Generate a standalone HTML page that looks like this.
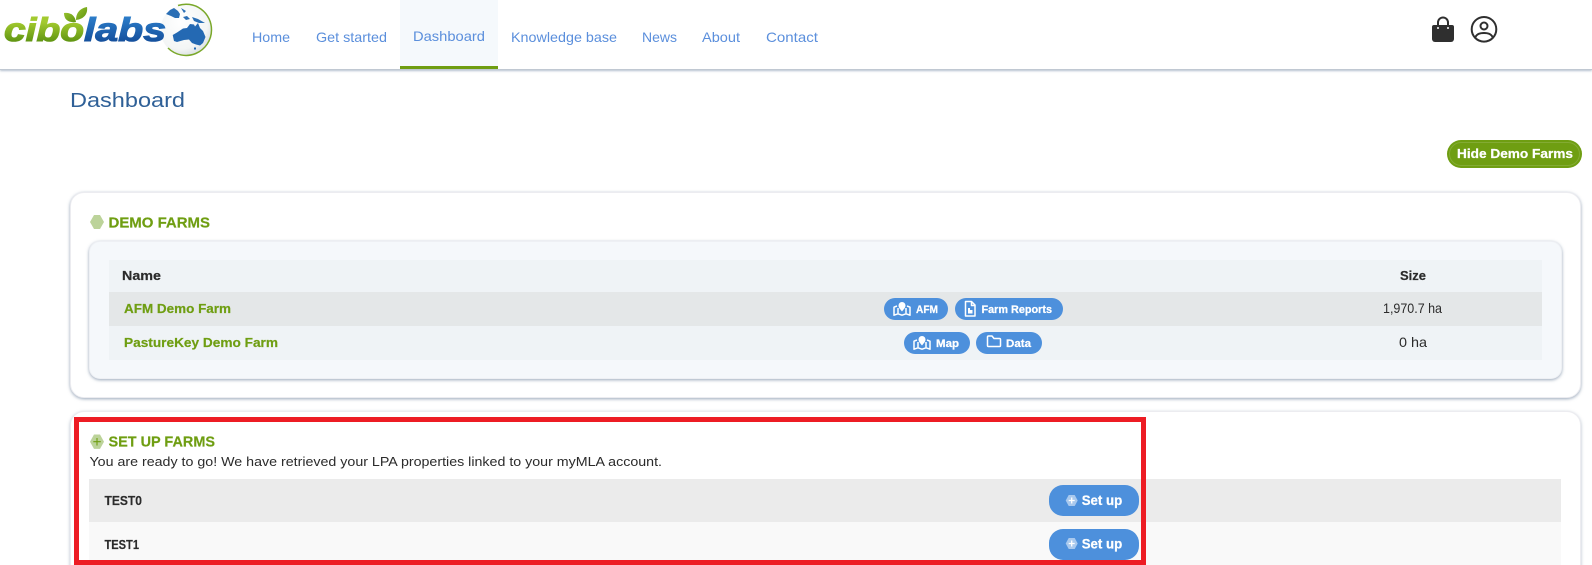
<!DOCTYPE html>
<html lang="en">
<head>
<meta charset="utf-8">
<title>Dashboard</title>
<style>
html,body{margin:0;padding:0;background:#fff;font-family:"Liberation Sans",sans-serif}
#page{position:relative;width:1592px;height:565px;overflow:hidden;background:#fff}
.b{position:absolute;box-sizing:border-box}
svg{position:absolute;left:0;top:0}
text{font-family:"Liberation Sans",sans-serif}
.nav{font-size:14px;fill:#5b8fdc}
.bw{font-weight:700;fill:#fff;stroke:#fff;stroke-width:.25}
.g{font-weight:700;fill:#6f9e12;stroke:#6f9e12;stroke-width:.2}
.d{fill:#2b2b2b}
.db{fill:#2b2b2b;font-weight:700;stroke:#2b2b2b;stroke-width:.2}
</style>
</head>
<body>
<div id="page">
<!-- header -->
<div class="b" style="left:0;top:0;width:1592px;height:70px;background:#fff;border-bottom:1px solid #c0c8d2;box-shadow:0 1px 2px rgba(120,140,165,.55)"></div>
<div class="b" style="left:400px;top:0;width:98px;height:69px;background:#f5f9fc;border-bottom:3px solid #6f9e12"></div>
<!-- demo card -->
<div class="b" style="left:70px;top:192px;width:1511px;height:206px;background:#fff;border:1px solid #ececf0;border-radius:14px;box-shadow:0 1px 3px rgba(110,130,155,.7)"></div>
<div class="b" style="left:89px;top:241px;width:1473px;height:138px;background:#f5f8fb;border:1px solid #eef0f4;border-radius:11px;box-shadow:0 1px 3px rgba(110,130,155,.7)"></div>
<div class="b" style="left:109px;top:260px;width:1433px;height:32px;background:#eff3f6"></div>
<div class="b" style="left:109px;top:292px;width:1433px;height:34px;background:#e4e7e8"></div>
<div class="b" style="left:109px;top:326px;width:1433px;height:34px;background:#eff3f6"></div>
<!-- buttons -->
<div class="b" style="left:1447px;top:140px;width:135px;height:28px;background:#6f9e12;border-radius:14px"></div>
<div class="b" style="left:1449px;top:142px;width:131px;height:24px;border:1px solid rgba(255,255,255,.14);border-radius:12px"></div>
<div class="b" style="left:884px;top:298px;width:64px;height:22px;background:#4d90dc;border-radius:11px"></div>
<div class="b" style="left:955px;top:298px;width:108px;height:22px;background:#4d90dc;border-radius:11px"></div>
<div class="b" style="left:904px;top:332px;width:66px;height:22px;background:#4d90dc;border-radius:11px"></div>
<div class="b" style="left:976px;top:332px;width:66px;height:22px;background:#4d90dc;border-radius:11px"></div>
<!-- setup card -->
<div class="b" style="left:70px;top:411px;width:1511px;height:180px;background:#fff;border:1px solid #ececf0;border-radius:14px;box-shadow:0 1px 3px rgba(110,130,155,.5)"></div>
<div class="b" style="left:89px;top:479px;width:1472px;height:43px;background:#ebebeb"></div>
<div class="b" style="left:89px;top:522px;width:1472px;height:43px;background:#f9f9f9"></div>
<div class="b" style="left:1049px;top:485px;width:90px;height:31px;background:#4d90dc;border-radius:14px"></div>
<div class="b" style="left:1049px;top:529px;width:90px;height:31px;background:#4d90dc;border-radius:14px"></div>
<!-- annotation -->
<div class="b" style="left:74px;top:417px;width:1072px;height:148px;border:5px solid #ed1c24"></div>

<svg width="1592" height="565" viewBox="0 0 1592 565" xmlns="http://www.w3.org/2000/svg">
<defs>
<linearGradient id="lg" gradientUnits="userSpaceOnUse" x1="0" y1="22" x2="0" y2="42"><stop offset="0" stop-color="#a3ca2f"/><stop offset="1" stop-color="#5f9412"/></linearGradient>
<linearGradient id="lb" gradientUnits="userSpaceOnUse" x1="0" y1="16" x2="0" y2="42"><stop offset="0" stop-color="#2d7fcb"/><stop offset="1" stop-color="#154f9c"/></linearGradient>
<linearGradient id="lf" x1="0" y1="0" x2="1" y2="1"><stop offset="0" stop-color="#96c22c"/><stop offset="1" stop-color="#5f9412"/></linearGradient>
<radialGradient id="gl" cx=".4" cy=".35" r=".75"><stop offset="0" stop-color="#fff"/><stop offset=".7" stop-color="#f3f5f5"/><stop offset="1" stop-color="#cfd6d8"/></radialGradient>
</defs>
<!-- logo -->
<circle cx="186" cy="30" r="25.500" fill="url(#gl)"/>
<path d="M178 5.500A25.500 25.500 0 0 1 211.500 30A25.500 25.500 0 0 1 168 48" fill="none" stroke="#7aa82a" stroke-width="1.500"/>
<path d="M172.700 35L177 32.500L183 28.500L187 28L190 24L194 24.500L195 26.500L198 23L200 28L203 31L205.500 37L203 43L200 45.500L196 44.500L192 43L189 39.500L184 40L177 42L174 41Z" fill="#2469b3"/>
<path d="M166 14L170 10L174 8L178 11L180 14L179 18L175 18L171 16ZM183 17L187 16L190 19L186 20ZM192 17L198 19L205 23L199 23L194 21ZM181 8L186 11L184 13Z" fill="#2b6fb5"/>
<path d="M194 47.500l2 0 0 2-2 0z" fill="#2469b3"/>
<path d="M76 22C75 15 70 12 64 13C64 20 69 23 76 22Z" fill="url(#lf)"/>
<path d="M76 20C76 12 81 8 87 7C88 14 84 19 76 20Z" fill="url(#lf)"/>
<text x="4" y="41" font-size="33" font-weight="700" font-style="italic" fill="url(#lg)" stroke="url(#lg)" stroke-width="1.100" textLength="80" lengthAdjust="spacingAndGlyphs">cibo</text>
<text x="84" y="41" font-size="33" font-weight="700" font-style="italic" fill="url(#lb)" stroke="url(#lb)" stroke-width="1.100" textLength="82" lengthAdjust="spacingAndGlyphs">labs</text>

<!-- nav -->
<text class="nav" x="252" y="42" textLength="38" lengthAdjust="spacingAndGlyphs">Home</text>
<text class="nav" x="316" y="42" textLength="71" lengthAdjust="spacingAndGlyphs">Get started</text>
<text class="nav" x="413" y="41" textLength="72" lengthAdjust="spacingAndGlyphs">Dashboard</text>
<text class="nav" x="511" y="42" textLength="106" lengthAdjust="spacingAndGlyphs">Knowledge base</text>
<text class="nav" x="642" y="42" textLength="35" lengthAdjust="spacingAndGlyphs">News</text>
<text class="nav" x="702" y="42" textLength="38" lengthAdjust="spacingAndGlyphs">About</text>
<text class="nav" x="766" y="42" textLength="52" lengthAdjust="spacingAndGlyphs">Contact</text>

<!-- bag + user icons -->
<path d="M1434 25h18a2 2 0 0 1 2 2V39a3 3 0 0 1-3 3h-16a3 3 0 0 1-3-3V27a2 2 0 0 1 2-2z" fill="#2f2f2f"/>
<path d="M1438 27V22.500a5 5 0 0 1 10 0V27" fill="none" stroke="#2f2f2f" stroke-width="2"/>
<circle cx="1438" cy="28" r="1" fill="#fff"/><circle cx="1448" cy="28" r="1" fill="#fff"/>
<circle cx="1484" cy="29.300" r="12.300" fill="none" stroke="#2f2f2f" stroke-width="2"/>
<circle cx="1484" cy="26" r="3.500" fill="none" stroke="#2f2f2f" stroke-width="2"/>
<path d="M1475 38C1476.500 33.500 1480.500 33 1484 33S1491.500 33.500 1493 38" fill="none" stroke="#2f2f2f" stroke-width="2"/>

<!-- title -->
<text x="70" y="107" font-size="20" fill="#2f6097" textLength="115" lengthAdjust="spacingAndGlyphs">Dashboard</text>
<text class="bw" x="1457" y="158" font-size="13" textLength="116" lengthAdjust="spacingAndGlyphs">Hide Demo Farms</text>

<!-- demo farms -->
<path d="M94 215h6l4 7-4 7h-6l-4-7z" fill="#bcd39a"/>
<text class="g" x="108.500" y="227.500" font-size="15" textLength="101.500" lengthAdjust="spacingAndGlyphs">DEMO FARMS</text>
<text class="db" x="122" y="280" font-size="13" textLength="39" lengthAdjust="spacingAndGlyphs">Name</text>
<text class="db" x="1400" y="280" font-size="13" textLength="26" lengthAdjust="spacingAndGlyphs">Size</text>
<text class="g" x="124" y="313" font-size="13" textLength="107" lengthAdjust="spacingAndGlyphs">AFM Demo Farm</text>
<text class="g" x="124" y="347" font-size="13" textLength="154" lengthAdjust="spacingAndGlyphs">PastureKey Demo Farm</text>
<text class="d" x="1383" y="313" font-size="14" textLength="59" lengthAdjust="spacingAndGlyphs">1,970.7 ha</text>
<text class="d" x="1399" y="347" font-size="14" textLength="28" lengthAdjust="spacingAndGlyphs">0 ha</text>

<!-- pill icons -->
<g fill="none" stroke="#fff" stroke-width="1.500" stroke-linejoin="round">
<path d="M897 306l-3 1.200v8l4-1.400 4 1.400 4-1.400 4 1.400v-8l-3-1.200M898 308v6M906 308v6"/>
<path d="M917 340l-3 1.200v8l4-1.400 4 1.400 4-1.400 4 1.400v-8l-3-1.200M918 342v6M926 342v6"/>
<path d="M965.500 301.500h6l3.500 3.500V316h-9.500zM971.500 301.500v4h3.500"/>
<path d="M987.500 337a1 1 0 0 1 1-1h3.500l2 2.500h5.500a1 1 0 0 1 1 1v6a1 1 0 0 1-1 1h-11a1 1 0 0 1-1-1z"/>
</g>
<path d="M902 311.500c-2-2.500-3.500-4-3.500-6a3.500 3.500 0 0 1 7 0c0 2-1.500 3.500-3.500 6z" fill="#fff"/>
<path d="M922 345.500c-2-2.500-3.500-4-3.500-6a3.500 3.500 0 0 1 7 0c0 2-1.500 3.500-3.500 6z" fill="#fff"/>
<path d="M968 308h2v2h2.500v3.500H968z" fill="#fff"/>
<text class="bw" x="916" y="313" font-size="11" textLength="22" lengthAdjust="spacingAndGlyphs">AFM</text>
<text class="bw" x="981.500" y="313" font-size="11" textLength="70.500" lengthAdjust="spacingAndGlyphs">Farm Reports</text>
<text class="bw" x="936" y="347" font-size="11" textLength="23" lengthAdjust="spacingAndGlyphs">Map</text>
<text class="bw" x="1006" y="347" font-size="11" textLength="25" lengthAdjust="spacingAndGlyphs">Data</text>

<!-- set up farms -->
<path d="M94 434.500h6l4 7.200-4 7.200h-6l-4-7.200z" fill="#bcd39a"/>
<path d="M97 438v7.500M93.300 441.700h7.500" stroke="#6f9e12" stroke-width="1.100"/>
<text class="g" x="108.500" y="446.700" font-size="15" textLength="106.500" lengthAdjust="spacingAndGlyphs">SET UP FARMS</text>
<text class="d" x="89.500" y="466" font-size="13" textLength="572.500" lengthAdjust="spacingAndGlyphs">You are ready to go! We have retrieved your LPA properties linked to your myMLA account.</text>
<text class="db" x="104.500" y="505" font-size="13" textLength="37.500" lengthAdjust="spacingAndGlyphs">TEST0</text>
<text class="db" x="104.500" y="549" font-size="13" textLength="34.500" lengthAdjust="spacingAndGlyphs">TEST1</text>

<path d="M1068.700 495h6l3 5.500-3 5.500h-6l-3-5.500z" fill="#a9c9ee"/>
<path d="M1071.700 497.500v6M1068.700 500.500h6" stroke="#fff" stroke-width="1.300"/>
<text class="bw" x="1081.700" y="505" font-size="13.500" textLength="40.500" lengthAdjust="spacingAndGlyphs">Set up</text>
<path d="M1068.700 538h6l3 5.500-3 5.500h-6l-3-5.500z" fill="#a9c9ee"/>
<path d="M1071.700 540.500v6M1068.700 543.500h6" stroke="#fff" stroke-width="1.300"/>
<text class="bw" x="1081.700" y="548.500" font-size="13.500" textLength="40.500" lengthAdjust="spacingAndGlyphs">Set up</text>
</svg>
</div>
</body>
</html>
